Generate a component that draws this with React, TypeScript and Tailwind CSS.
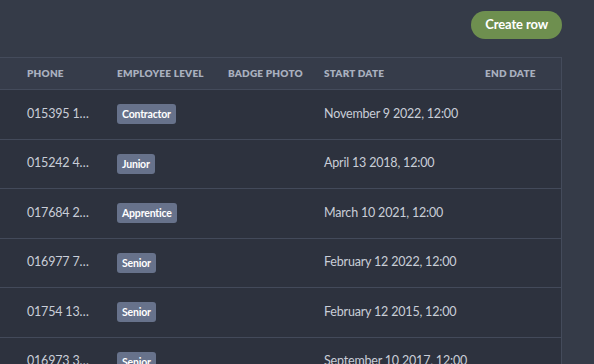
const rows = [
  { phone: '015395 1…', level: 'Contractor', start: 'November 9 2022, 12:00' },
  { phone: '015242 4…', level: 'Junior', start: 'April 13 2018, 12:00' },
  { phone: '017684 2…', level: 'Apprentice', start: 'March 10 2021, 12:00' },
  { phone: '016977 7…', level: 'Senior', start: 'February 12 2022, 12:00' },
  { phone: '01754 13…', level: 'Senior', start: 'February 12 2015, 12:00' },
  { phone: '016973 3…', level: 'Senior', start: 'September 10 2017, 12:00' },
];

export default function App() {
  return (
    <div
      className="w-[594px] h-[364px] overflow-hidden bg-[#353b48] flex flex-col"
      style={{ fontFamily: 'Lato, "Noto Sans", sans-serif' }}
    >
      {/* Toolbar */}
      <div className="flex shrink-0 justify-end pt-[11px] pr-[32px] h-[57px]">
        <button className="h-[28px] px-[14px] rounded-full bg-[#6e8f4f] text-white text-[13px] tracking-[-0.01em] font-bold">
          Create row
        </button>
      </div>

      {/* Table */}
      <div className="w-[562px] shrink-0 border-t border-r border-[#444b5b]">
        <div className="flex h-[32px] items-center border-b border-[#444b5b] bg-[#363c4a] text-[10px] font-extrabold tracking-[0.02em] uppercase text-[#a9b0bf]">
          <div className="w-[117px] pl-[27px]">Phone</div>
          <div className="w-[111px]">Employee level</div>
          <div className="w-[96px]">Badge photo</div>
          <div className="w-[161px]">Start date</div>
          <div className="flex-1">End date</div>
        </div>
        {rows.map((r, i) => (
          <div
            key={i}
            className="flex shrink-0 h-[49.5px] items-center border-b border-[#434a5a] bg-[#2d323e] text-[12.5px] tracking-[-0.015em] text-[#c9ced8]"
          >
            <div className="w-[117px] pl-[27px] whitespace-nowrap">{r.phone}</div>
            <div className="w-[111px]">
              <span className="inline-block rounded-[3px] bg-[#67728b] px-[5px] py-[3px] text-[10.5px] leading-[14px] font-bold text-white">
                {r.level}
              </span>
            </div>
            <div className="w-[96px]" />
            <div className="w-[161px] whitespace-nowrap">{r.start}</div>
            <div className="flex-1" />
          </div>
        ))}
      </div>
    </div>
  );
}
